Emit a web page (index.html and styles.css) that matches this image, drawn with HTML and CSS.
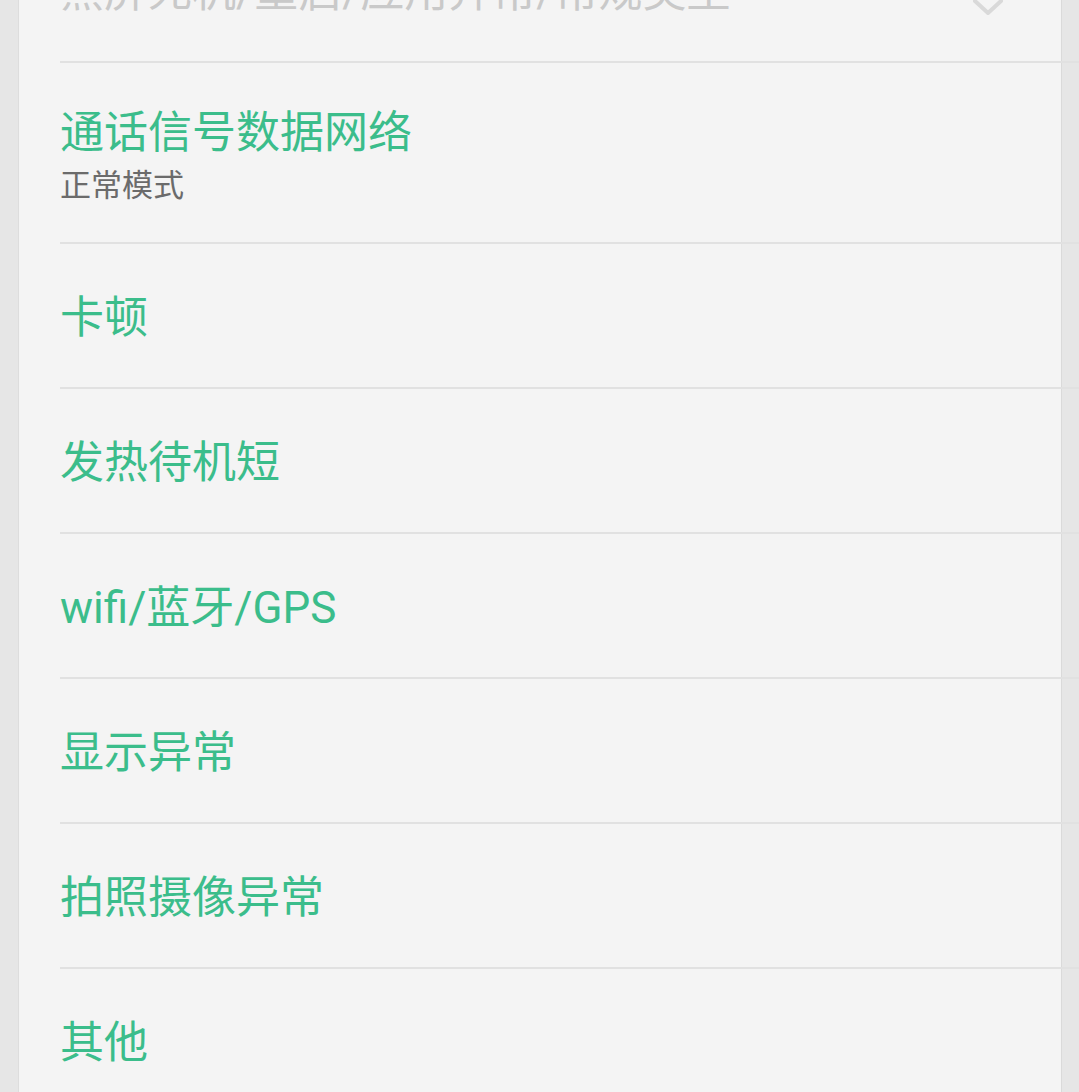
FILE: index.html
```html
<!DOCTYPE html>
<html lang="zh-CN">
<head>
  <meta charset="UTF-8" />
  <title>问题类型</title>
  <meta name="viewport" content="width=device-width, initial-scale=1.0" />
  <link rel="stylesheet" href="styles.css">
</head>
<body>

  <div class="screen">
    <div class="edge"></div>

    <div class="panel">
      <ul class="list">
        <li class="row row-muted">
          <span class="title">黑屏死机/重启/应用异常/常规类型</span>
          <svg class="chevron" width="32" height="18" viewBox="0 0 32 18">
            <polyline points="3,3 16,15 29,3" fill="none" stroke="#d9d9d9" stroke-width="4" stroke-linecap="round" stroke-linejoin="round" />
          </svg>
        </li>
        <li class="row row-tall">
          <span class="title">通话信号数据网络</span>
          <span class="sub">正常模式</span>
        </li>
        <li class="row"><span class="title">卡顿</span></li>
        <li class="row"><span class="title">发热待机短</span></li>
        <li class="row"><span class="title">wifi/蓝牙/GPS</span></li>
        <li class="row"><span class="title">显示异常</span></li>
        <li class="row"><span class="title">拍照摄像异常</span></li>
        <li class="row"><span class="title">其他</span></li>
      </ul>
    </div>
  </div>

</body>
</html>
```

FILE: styles.css
```css
body {
  margin: 0;
  font-family: Roboto, "Noto Sans CJK SC", sans-serif;
  background: #f4f4f4;
  overflow: hidden;
}

.screen {
  display: flex;
  height: 1092px;
  overflow: hidden;
}

.edge {
  width: 18px;
  flex-shrink: 0;
  background: #e6e6e6;
  border-right: 1px solid #dddddd;
}

.panel {
  flex: 1;
  background: linear-gradient(to left, #e6e6e6 17px, #dadada 17px, #dadada 18px, #f4f4f4 18px);
}

.list {
  list-style: none;
  margin: -82px 0 0 0;
  padding: 0;
}

.row {
  display: flex;
  align-items: center;
  height: 145px;
  margin-left: 41px;
  padding-top: 4px;
  box-sizing: border-box;
  border-bottom: 2px solid #e1e1e1;
}

.title {
  font-size: 44px;
  line-height: 52px;
  color: #3bbd8b;
}

.row-muted .title {
  color: #c9c9c9;
}

.chevron {
  margin-left: auto;
  margin-right: 75px;
  margin-top: 30px;
}

.row-tall {
  height: 181px;
  flex-direction: column;
  align-items: flex-start;
  justify-content: center;
  padding-top: 8px;
  padding-bottom: 2px;
  gap: 8px;
}

.sub {
  font-size: 31px;
  line-height: 38px;
  color: #6b6b6b;
}
```
